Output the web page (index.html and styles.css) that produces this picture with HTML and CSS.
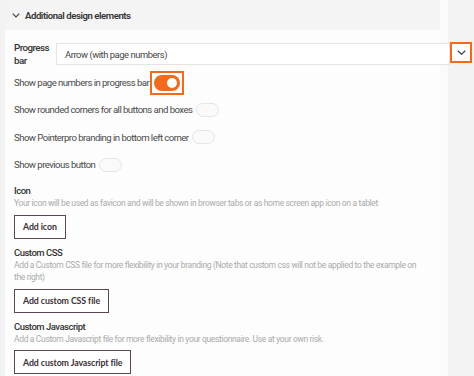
FILE: index.html
```html
<!DOCTYPE html>
<html lang="en">

<head>
    <meta charset="UTF-8">
    <meta name="viewport" content="width=device-width, initial-scale=1.0">
    <title>Design settings</title>
    <link rel="stylesheet" href="styles.css">
</head>

<body>
    <div class="page">
        <div class="panel">
            <div class="panel-header">
                <svg class="chevron" width="8" height="5" viewBox="0 0 8 5">
                    <path d="M0.7 0.7l3.3 3.3 3.3-3.3" fill="none" stroke="#444" stroke-width="1.2"/>
                </svg>
                <span>Additional design elements</span>
            </div>
            <div class="panel-body">
                <div class="select-row">
                    <label class="select-label">Progress<br>bar</label>
                    <div class="select">
                        <span>Arrow (with page numbers)</span>
                    </div>
                </div>

                <div class="toggles">
                    <div class="toggle-row">
                        <span>Show page numbers in progress bar</span>
                        <span class="highlight"><span class="toggle on"></span></span>
                    </div>
                    <div class="toggle-row">
                        <span>Show rounded corners for all buttons and boxes</span>
                        <span class="toggle"></span>
                    </div>
                    <div class="toggle-row">
                        <span>Show Pointerpro branding in bottom left corner</span>
                        <span class="toggle"></span>
                    </div>
                    <div class="toggle-row">
                        <span>Show previous button</span>
                        <span class="toggle"></span>
                    </div>
                </div>

                <div class="upload">
                    <h4>Icon</h4>
                    <p>Your icon will be used as favicon and will be shown in browser tabs or as home screen app icon on a tablet</p>
                    <button>Add icon</button>
                </div>
                <div class="upload">
                    <h4>Custom CSS</h4>
                    <p>Add a Custom CSS file for more flexibility in your branding (Note that custom css will not be applied to the example on the right)</p>
                    <button>Add custom CSS file</button>
                </div>
                <div class="upload">
                    <h4>Custom Javascript</h4>
                    <p>Add a Custom Javascript file for more flexibility in your questionnaire. Use at your own risk.</p>
                    <button>Add custom Javascript file</button>
                </div>
            </div>
        </div>
        <div class="side">
            <div class="dropdown-btn">
                <svg width="9" height="5" viewBox="0 0 9 5">
                    <path d="M0.7 0.7l3.8 3.6 3.8-3.6" fill="none" stroke="#444" stroke-width="1.2"/>
                </svg>
            </div>
        </div>
    </div>
</body>

</html>
```

FILE: styles.css
```css
*{
    box-sizing: border-box;
    padding: 0;
    margin: 0;
}

body{
    background-color: #f3f3f3;
    font-family: Roboto, "Liberation Sans", sans-serif;
    color: #3a3a3a;
    overflow: hidden;
}

.page{
    display: flex;
    height: 376px;
    padding-left: 5px;
}

.panel{
    width: 435px;
    background-color: #fdfdfd;
}

.panel-header{
    display: flex;
    align-items: center;
    gap: 5px;
    height: 30px;
    padding-left: 7px;
    background-color: #f4f4f4;
    font-size: 9.6px;
    font-weight: 600;
    letter-spacing: -0.45px;
    color: #333;
}

.panel-body{
    padding: 11px 0 0 9px;
}

.select-row{
    display: flex;
    align-items: center;
    gap: 6px;
    position: relative;
    z-index: 1;
}

.select-label{
    width: 36px;
    font-size: 9.8px;
    font-weight: 500;
    letter-spacing: -0.55px;
    line-height: 13px;
    color: #333;
}

.select{
    flex: 1;
    margin-right: -10px;
    height: 22px;
    display: flex;
    align-items: center;
    padding-left: 8px;
    border: 1px solid #e4e4e4;
    background-color: #fff;
    font-size: 9.4px;
    letter-spacing: -0.45px;
    color: #444;
}

.toggles{
    margin-top: 2px;
}

.toggle-row{
    display: flex;
    align-items: center;
    gap: 4px;
    height: 27.3px;
    font-size: 9.6px;
    letter-spacing: -0.55px;
    color: #4a4a4a;
}

.toggle{
    width: 23px;
    height: 14px;
    border-radius: 7px;
    border: 1px solid #e6e6e6;
    background-color: #fafafa;
}

.toggle.on{
    display: block;
    width: 26px;
    height: 16px;
    border: none;
    border-radius: 8px;
    background-color: #f26a1b;
    position: relative;
}

.toggle.on::after{
    content: "";
    position: absolute;
    right: 3px;
    top: 3px;
    width: 10px;
    height: 10px;
    border-radius: 50%;
    background-color: #fff;
}

.highlight{
    display: flex;
    align-items: center;
    justify-content: center;
    margin-left: -3px;
    width: 34px;
    height: 24px;
    border: 2px solid #f26a1b;
}

.upload{
    margin-top: 7px;
}

.upload + .upload{
    margin-top: 8px;
}

.upload h4{
    font-size: 9.5px;
    font-weight: 500;
    letter-spacing: -0.5px;
    color: #333;
    line-height: 12px;
}

.upload p{
    font-size: 8.5px;
    letter-spacing: -0.35px;
    line-height: 12.5px;
    color: #aaa;
    padding-right: 14px;
}

.upload button{
    margin-top: 5px;
    height: 24px;
    padding: 0 8px;
    border: 1px solid #5b4656;
    background-color: #fff;
    font-family: Lato, sans-serif;
    font-size: 8.8px;
    font-weight: 700;
    letter-spacing: -0.1px;
    color: #3b2f36;
}

.side{
    flex: 1;
    position: relative;
    border-left: 8px solid #fafafa;
}

.dropdown-btn{
    position: absolute;
    top: 42px;
    left: 2px;
    width: 22px;
    height: 21px;
    display: flex;
    align-items: center;
    justify-content: center;
    border: 2px solid #f26a1b;
    background-color: #fff;
    z-index: 2;
}
```
